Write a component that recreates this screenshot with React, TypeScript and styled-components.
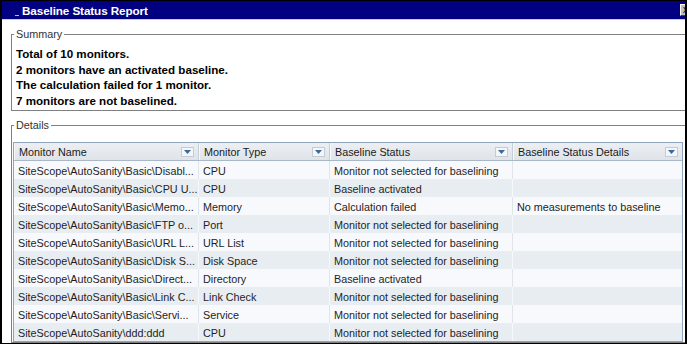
import styled, { createGlobalStyle } from 'styled-components'

const GlobalStyle = createGlobalStyle`
  html, body {
    margin: 0;
    padding: 0;
    background: #ffffff;
  }
  body {
    font-family: "Liberation Sans", Arial, sans-serif;
  }
`

const COLUMNS = '185px 131px 183px 1fr'

const Window = styled.div`
  width: 687px;
  height: 344px;
  box-sizing: border-box;
  border-style: solid;
  border-color: #000000;
  border-width: 1px 2px 1px 2px;
  background: #ffffff;
  overflow: hidden;
  display: flex;
  flex-direction: column;
`

const TitleBar = styled.div`
  height: 18px;
  flex: none;
  background: #000080;
  border-bottom: 1px solid #c8c8ec;
  display: flex;
  align-items: center;
  padding-left: 13px;
`

const TitleIcon = styled.span`
  width: 4px;
  height: 1px;
  background: #b8b8d8;
  align-self: flex-end;
  margin-bottom: 3px;
  margin-right: 3px;
`

const TitleText = styled.span`
  flex: 1;
  color: #ffffff;
  font-weight: bold;
  font-size: 11.7px;
  letter-spacing: -0.1px;
`

const CloseButton = styled.span`
  width: 14px;
  height: 12px;
  margin-right: -9px;
  box-sizing: border-box;
  background: #c0c0c0;
  border-top: 1px solid #ffffff;
  border-left: 1px solid #ffffff;
  border-bottom: 1px solid #404040;
  font-size: 10px;
  line-height: 10px;
  padding-left: 2px;
  color: #000000;
`

const Body = styled.div`
  flex: 1;
  padding: 8px 0 0 9px;
  display: flex;
  flex-direction: column;
  gap: 8px;
`

const Group = styled.fieldset`
  margin: 0 -4px 0 0;
  padding: 0;
  border: 1px solid #808080;
  min-width: 0;
`

const Legend = styled.legend`
  margin-left: 2px;
  padding: 0 2px;
  font-size: 10.8px;
  line-height: 13px;
  color: #333333;
`

const SummaryLines = styled.div`
  padding: 5px 0 2px 4px;
`

const SummaryLine = styled.div`
  font-size: 11.6px;
  font-weight: bold;
  line-height: 15.5px;
  color: #000000;
`

const Table = styled.div`
  margin: 10px 5px 0 1px;
  border: 1px solid #8ea4bb;
  background: #f7f9fc;
`

const HeaderRow = styled.div`
  display: grid;
  grid-template-columns: ${COLUMNS};
  height: 17px;
  border-bottom: 1px solid #a9b8c8;
  background: linear-gradient(#eceff3, #dfe4ea);
`

const HeaderCell = styled.div`
  display: flex;
  align-items: center;
  justify-content: space-between;
  padding: 1px 4px 0 5px;
  border-right: 1px solid #c6cfd8;
  box-shadow: inset 1px 0 0 #f6f8fa;
  font-size: 10.8px;
  color: #1a1a1a;

  &:last-child {
    border-right: none;
  }
`

const SortButton = styled.span`
  width: 13px;
  height: 10px;
  box-sizing: border-box;
  border: 1px solid #c3cbd4;
  background: #f4f6f9;
  display: flex;
  align-items: center;
  justify-content: center;
`

const Row = styled.div<{ $shaded: boolean }>`
  display: grid;
  grid-template-columns: ${COLUMNS};
  height: 18px;
  background: ${({ $shaded }) => ($shaded ? '#e8edf2' : '#f7f9fc')};

  & > div {
    border-right: 1px solid ${({ $shaded }) => ($shaded ? '#f6f8fb' : '#dfe5eb')};
  }
  & > div:last-child {
    border-right: none;
  }
`

const Cell = styled.div`
  padding-left: 4px;
  font-size: 10.8px;
  line-height: 20px;
  height: 18px;
  color: #1e1e1e;
  white-space: nowrap;
  overflow: hidden;
`

const summary = [
  'Total of 10 monitors.',
  '2 monitors have an activated baseline.',
  'The calculation failed for 1 monitor.',
  '7 monitors are not baselined.',
]

const headers = ['Monitor Name', 'Monitor Type', 'Baseline Status', 'Baseline Status Details']

const NOT_SELECTED = 'Monitor not selected for baselining'

const rows: [string, string, string, string][] = [
  ['SiteScope\\AutoSanity\\Basic\\Disabl...', 'CPU', NOT_SELECTED, ''],
  ['SiteScope\\AutoSanity\\Basic\\CPU U...', 'CPU', 'Baseline activated', ''],
  ['SiteScope\\AutoSanity\\Basic\\Memo...', 'Memory', 'Calculation failed', 'No measurements to baseline'],
  ['SiteScope\\AutoSanity\\Basic\\FTP o...', 'Port', NOT_SELECTED, ''],
  ['SiteScope\\AutoSanity\\Basic\\URL L...', 'URL List', NOT_SELECTED, ''],
  ['SiteScope\\AutoSanity\\Basic\\Disk S...', 'Disk Space', NOT_SELECTED, ''],
  ['SiteScope\\AutoSanity\\Basic\\Direct...', 'Directory', 'Baseline activated', ''],
  ['SiteScope\\AutoSanity\\Basic\\Link C...', 'Link Check', NOT_SELECTED, ''],
  ['SiteScope\\AutoSanity\\Basic\\Servi...', 'Service', NOT_SELECTED, ''],
  ['SiteScope\\AutoSanity\\ddd:ddd', 'CPU', NOT_SELECTED, ''],
]

const DownArrow = () => (
  <svg width="7" height="4" viewBox="0 0 7 4">
    <path d="M0 0 H7 L3.5 4 Z" fill="#3a6a9c" />
  </svg>
)

export default function App() {
  return (
    <>
      <GlobalStyle />
      <Window>
        <TitleBar>
          <TitleIcon />
          <TitleText>Baseline Status Report</TitleText>
          <CloseButton>x</CloseButton>
        </TitleBar>
        <Body>
          <Group>
            <Legend>Summary</Legend>
            <SummaryLines>
              {summary.map((line) => (
                <SummaryLine key={line}>{line}</SummaryLine>
              ))}
            </SummaryLines>
          </Group>
          <Group>
            <Legend>Details</Legend>
            <Table>
              <HeaderRow>
                {headers.map((h) => (
                  <HeaderCell key={h}>
                    <span>{h}</span>
                    <SortButton>
                      <DownArrow />
                    </SortButton>
                  </HeaderCell>
                ))}
              </HeaderRow>
              {rows.map((r, i) => (
                <Row key={i} $shaded={i % 2 === 1}>
                  {r.map((c, j) => (
                    <Cell key={j}>{c}</Cell>
                  ))}
                </Row>
              ))}
            </Table>
          </Group>
        </Body>
      </Window>
    </>
  )
}
